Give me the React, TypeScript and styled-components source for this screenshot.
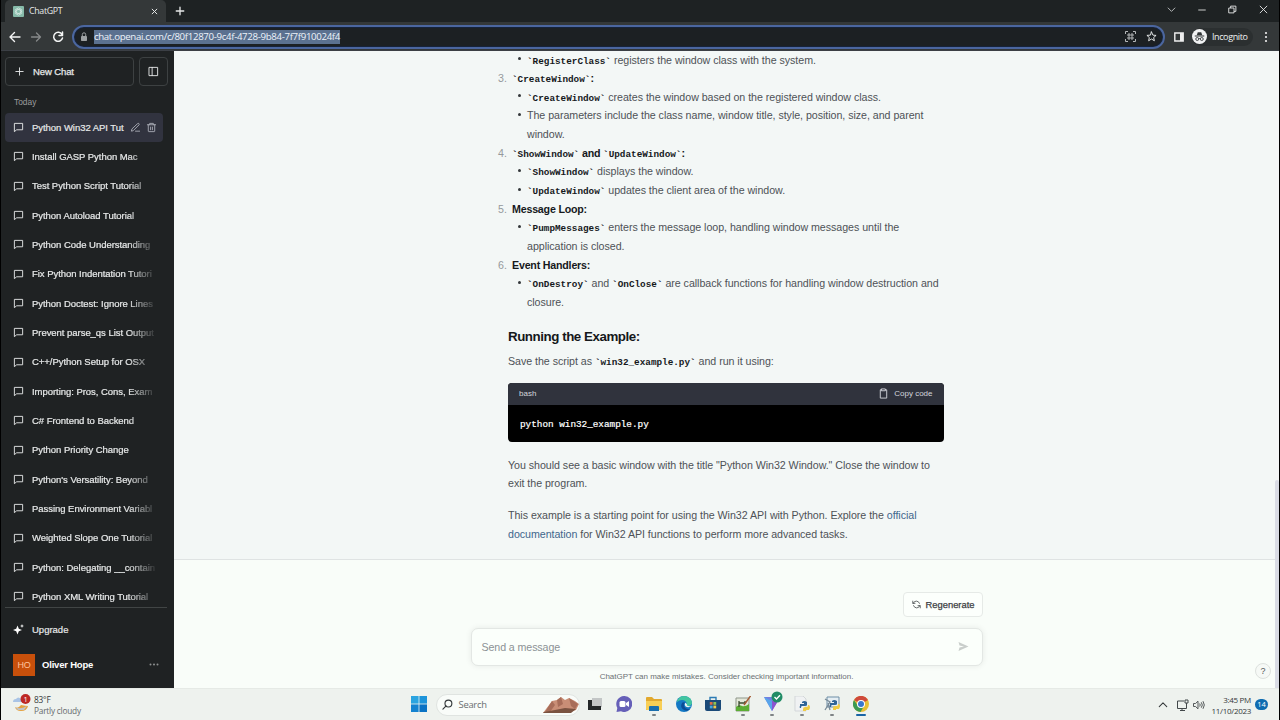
import React from "react";
import styled, { createGlobalStyle, css } from "styled-components";

const sans = `"Liberation Sans", Arial, sans-serif`;
const system = `"Open Sans", "Noto Sans", sans-serif`;
const mono = `"Liberation Mono", monospace`;

const GlobalStyle = createGlobalStyle`
  * { box-sizing: border-box; }
  body { margin: 0; background: #000; overflow: hidden; }
  svg { display: block; flex: none; }
`;

/* ---------- window ---------- */
const Screen = styled.div`
  width: 1280px; height: 720px; display: flex; flex-direction: column;
  border-left: 1px solid #000; border-right: 1px solid #000;
  overflow: hidden; font-family: ${sans};
`;
const TabStrip = styled.header`
  height: 22px; flex: none; display: flex; background: #1e2223; color: #e6e8e8;
  font-family: ${system}; padding-left: 4px;
`;
const Tab = styled.div`
  width: 161px; height: 22px; background: #343839; border-radius: 5px 5px 0 0;
  display: flex; align-items: center; padding: 0 8px 0 8px; font-size: 8.8px;
`;
const TabTitle = styled.span`flex: 1; margin-left: 5px; letter-spacing: -0.3px;`;
const NewTab = styled.div`width: 28px; display: grid; place-items: center;`;
const WindowButtons = styled.div`
  margin-left: auto; display: flex; align-items: center; height: 19px;
`;
const WindowButton = styled.div`width: 30.7px; display: grid; place-items: center;`;

const Toolbar = styled.nav`
  height: 29px; flex: none; display: flex; align-items: center;
  background: #343839; color: #f0f2f2; font-family: ${system};
  padding: 1px 0 0 8px; border-bottom: 1px solid #3b3f45;
`;
const NavButton = styled.div<{ $dim?: boolean }>`
  width: 21.3px; color: ${(p) => (p.$dim ? "#86898a" : "#f4f5f5")};
`;
const AddressBar = styled.div`
  width: 1093px; height: 24px; border: 2px solid #4b669f; border-radius: 12px; margin-left: -1px;
  background: #1c2023; display: flex; align-items: center; padding: 0 6px 0 6px;
  box-shadow: inset 0 0 0 1px #16233a;
`;
const Url = styled.span`
  margin: 1px 0 0 6px; height: 14px; line-height: 14px; background: #5b7190; color: #edf3fa;
  font-size: 9.7px; letter-spacing: -0.34px; white-space: nowrap;
`;
const AddressIcons = styled.div`margin-left: auto; display: flex; gap: 10px; align-items: center;`;
const Incognito = styled.div`
  display: flex; align-items: center; height: 18px; width: 61px; border-radius: 9px;
  background: #2b2f30; font-size: 9px; letter-spacing: -0.38px; gap: 5px; margin-left: 8px;
`;
const Body = styled.div`height: 637px; flex: none; display: flex;`;

/* ---------- sidebar ---------- */
const Sidebar = styled.aside`
  width: 172.5px; flex: none; background: #1f2223; color: #e7e9e9; padding: 6px 5px 0 4px;
  display: flex; flex-direction: column; font-size: 9.5px;
`;
const SideTop = styled.div`display: flex; gap: 5px; height: 29px; flex: none;`;
const OutlineButton = styled.div<{ $w: number }>`
  width: ${(p) => p.$w}px; height: 29px; border: 1px solid #3d4142; border-radius: 4px;
  display: flex; align-items: center; padding-left: 8px; gap: 8px; -webkit-text-stroke: 0.25px;
  letter-spacing: -0.1px;
`;
const GroupLabel = styled.div`
  height: 27px; padding: 10px 0 0 9px; font-size: 8.4px; line-height: 12px; color: #9b9d9e; flex: none;
`;
const ChatList = styled.div`height: 494px; overflow: hidden; flex: none;`;
const ChatRow = styled.div<{ $active?: boolean }>`
  height: 29.33px; width: 158px; display: flex; align-items: center; padding-left: 8px;
  border-radius: 4px; background: ${(p) => (p.$active ? "#31333f" : "transparent")};
`;
const ChatTitle = styled.span<{ $active?: boolean }>`
  width: ${(p) => (p.$active ? 93 : 124)}px; margin-left: 8px; overflow: hidden; white-space: nowrap;
  line-height: 14px; letter-spacing: -0.04px; -webkit-text-stroke: 0.2px;
  ${(p) =>
    !p.$active &&
    css`
      mask-image: linear-gradient(90deg, #000 96px, transparent 126px);
    `}
`;
const RowTools = styled.span`display: flex; gap: 5px; margin-left: 5px; color: #a9abb5;`;
const SideFooter = styled.div`border-top: 1px solid #414545; flex: 1; width: 162px;`;
const Upgrade = styled.div`
  height: 42px; display: flex; align-items: center; gap: 8px; padding-left: 8px; -webkit-text-stroke: 0.2px;
`;
const User = styled.div`
  height: 29px; display: flex; align-items: center; padding: 0 8px; font-weight: bold; color: #fff;
  letter-spacing: -0.2px;
`;
const Avatar = styled.div`
  width: 22px; height: 22px; background: #c8500b; color: #ffc39c; display: grid; place-items: center;
  font-size: 9px; font-weight: 400; margin-right: 7px;
`;
const More = styled.span`margin-left: auto; color: #8e9090;`;

/* ---------- conversation ---------- */
const Main = styled.main`
  flex: 1; height: 637px; background: #f9fdf9; display: flex; flex-direction: column; overflow: hidden;
`;
const Answer = styled.section`
  height: 509px; flex: none; background: #f3f7f6; border-bottom: 1px solid #dfe3e3;
  padding-left: 334.5px; color: #4e5256; font-size: 10.67px; line-height: 18.67px;
`;
const Steps = styled.div`margin-top: -0.5px;`;
const Line = styled.div<{ $pad?: number }>`
  display: flex; height: 18.67px; white-space: pre; padding-left: ${(p) => p.$pad ?? 0}px;
  letter-spacing: -0.04px;
`;
const Marker = styled.span<{ $num?: boolean }>`
  width: ${(p) => (p.$num ? 14 : 11)}px; flex: none; margin-left: ${(p) => (p.$num ? -10 : 8)}px;
  color: ${(p) => (p.$num ? "#95999c" : "#2a2d30")};
`;
const Dot = styled.i`display: block; width: 3px; height: 3px; border-radius: 50%; background: #33363a; margin: 6.5px 0 0 2px;`;
const Code = styled.code`
  font: bold 9.33px/1 ${mono}; color: #16191c; letter-spacing: 0;
`;
const Strong = styled.strong`font-weight: bold; color: #16191c; letter-spacing: -0.2px;`;
const Heading = styled.h3`
  margin: 14px 0 5px; height: 21.3px; line-height: 21.3px; font-size: 13.33px; font-weight: bold;
  color: #15181b; letter-spacing: -0.45px;
`;
const CodeBlock = styled.div`
  width: 435.5px; height: 58.5px; margin: 12.5px 0 14px; border-radius: 4px; overflow: hidden; background: #000;
`;
const CodeHead = styled.div`
  height: 21.5px; background: #30333d; color: #d3d5dc; display: flex; align-items: center;
  padding: 0 11px; font-size: 8px; line-height: 12px;
`;
const Copy = styled.span`margin-left: auto; display: flex; gap: 5px; align-items: center;`;
const CodeBody = styled.pre`
  margin: 0; padding: 12px 12px; font: 9.33px/16px ${mono}; color: #fff; -webkit-text-stroke: 0.2px #fff;
`;
const Gap = styled.div`height: 13.3px;`;
const Link = styled.a`color: #41668c;`;

const Composer = styled.section`
  flex: 1; width: 512px; margin-left: 297px; padding-top: 32.3px; display: flex; flex-direction: column;
`;
const Regenerate = styled.button`
  align-self: flex-end; width: 80px; height: 25px; display: flex; align-items: center; gap: 5px;
  padding: 0 0 0 8px; border: 1px solid #e6eae7; border-radius: 4px; background: #fcfffc;
  color: #3c4043; font: 9.4px ${sans}; -webkit-text-stroke: 0.25px; white-space: nowrap;
`;
const Input = styled.div`
  height: 38px; margin-top: 10.7px; border: 1px solid #e3e7e4; border-radius: 7px; background: #fbfffb;
  box-shadow: 0 0 6px rgba(0, 0, 0, 0.08); display: flex; align-items: center; justify-content: space-between;
  padding: 0 13px 0 10px; color: #8c9295; font-size: 10.67px; letter-spacing: -0.1px;
`;
const Note = styled.div`margin-top: 5px; text-align: center; font-size: 8px; line-height: 12px; color: #6b7073;`;
const ScrollTrack = styled.div`
  width: 4.5px; flex: none; background: #f4f6f6; display: flex; align-items: flex-end;
`;
const Thumb = styled.div`width: 4.5px; height: 208px; background: #d9dbe4; border-radius: 2px 2px 0 0;`;
const Help = styled.div`
  position: absolute; left: 1255px; top: 663px; width: 16px; height: 16px; border-radius: 50%;
  border: 1px solid #dde1de; background: #f6f9f6; display: grid; place-items: center;
  font-size: 9px; color: #55595b;
`;

/* ---------- taskbar ---------- */
const Taskbar = styled.footer`
  height: 32px; flex: none; background: #eef2ee; display: flex; align-items: center; border-top: 1px solid #e6eae6;
  font-family: ${system}; color: #34383a; font-size: 8.3px; line-height: 11px;
`;
const Weather = styled.div`
  width: 401.5px; padding-left: 11px; display: flex; gap: 2px; letter-spacing: -0.22px;
`;
const Muted = styled.div`color: #65696b;`;
const Search = styled.div`
  width: 144px; height: 22px; border-radius: 11px; background: #f9fcf9; border: 1px solid #e0e4e1;
  display: flex; align-items: center; padding-left: 5px; font-size: 9.4px; color: #6a6e70; margin-right: 0.5px;
`;
const SearchText = styled.span`flex: 1; margin-left: 6px; letter-spacing: -0.25px;`;
const SearchIcon = styled.span`color: #33383a;`;
const AppSlot = styled.div<{ $w?: number; $run?: "on" | "active" }>`
  width: ${(p) => p.$w ?? 29.6}px; height: 31px; display: flex; flex-direction: column; align-items: center;
  padding-top: 6.5px;
  &::after {
    content: ""; margin-top: 2.5px; height: 2px; border-radius: 1px;
    width: ${(p) => (p.$run === "active" ? 10 : p.$run ? 4 : 0)}px;
    background: ${(p) => (p.$run === "active" ? "#1a65a5" : "#7f8486")};
  }
`;
const Tray = styled.div`margin-left: auto; display: flex; align-items: center; padding-right: 11px;`;
const Clock = styled.div`
  width: 40px; margin: 0 4px 0 6px; font-size: 8px; letter-spacing: -0.3px; white-space: nowrap;
  display: flex; flex-direction: column; align-items: flex-end;
`;
const Badge = styled.div`
  width: 13px; height: 11px; border-radius: 6px; background: #0f6cb0; color: #fff; display: grid; place-items: center; font-size: 7.5px;
`;

type IconProps = { size?: number; w?: number; children: React.ReactNode };
const Stroke = ({ size = 11, w = 2, children }: IconProps) => (
  <svg width={size} height={size} viewBox="0 0 24 24" fill="none" stroke="currentColor" strokeWidth={w} strokeLinecap="round" strokeLinejoin="round">
    {children}
  </svg>
);
const ChatIcon = () => (
  <Stroke size={11}>
    <path d="M3 3h18v14H8l-5 4z" strokeLinecap="butt" />
  </Stroke>
);

const chats = [
  "Install GASP Python Mac",
  "Test Python Script Tutorial",
  "Python Autoload Tutorial",
  "Python Code Understanding",
  "Fix Python Indentation Tutori",
  "Python Doctest: Ignore Lines",
  "Prevent parse_qs List Output",
  "C++/Python Setup for OSX",
  "Importing: Pros, Cons, Exam",
  "C# Frontend to Backend",
  "Python Priority Change",
  "Python's Versatility: Beyond",
  "Passing Environment Variabl",
  "Weighted Slope One Tutorial",
  "Python: Delegating __contain",
  "Python XML Writing Tutorial",
];

const Bullet = ({ children }: { children: React.ReactNode }) => (
  <Line>
    <Marker><Dot /></Marker>
    <span>{children}</span>
  </Line>
);
const Numbered = ({ n, children }: { n: number; children: React.ReactNode }) => (
  <Line>
    <Marker $num>{n}.</Marker>
    <span>{children}</span>
  </Line>
);
const Tick = ({ children }: { children: string }) => <Code>{"`" + children + "`"}</Code>;

const PythonMark = ({ x, y }: { x: number; y: number }) => (
  <g transform={`translate(${x} ${y})`}>
    <path d="M1 5V3h4V2H3V1q2-2 5 0v3q0 1-2 1H3q-1 0-1 2H1Q0 6 1 5z" fill="#2f6597" />
    <path d="M9 4h1q2 2 0 5H7v1H4V8q0-2 2-2h2q1 0 1-2z" fill="#f0cc45" />
  </g>
);

export default function App() {
  return (
    <>
      <GlobalStyle />
      <Screen>
        <TabStrip>
          <Tab>
            <svg width="11" height="11" viewBox="0 0 22 22">
              <rect width="22" height="22" rx="2" fill="#86baa9" />
              <g fill="none" stroke="#e0efe9" strokeWidth="1.1">
                <ellipse cx="11" cy="11" rx="4" ry="7.5" />
                <ellipse cx="11" cy="11" rx="4" ry="7.5" transform="rotate(60 11 11)" />
                <ellipse cx="11" cy="11" rx="4" ry="7.5" transform="rotate(120 11 11)" />
              </g>
            </svg>
            <TabTitle>ChatGPT</TabTitle>
            <Stroke size={7} w={3.4}><path d="M4 4l16 16M20 4L4 20" /></Stroke>
          </Tab>
          <NewTab><Stroke size={10} w={3.2}><path d="M12 3v18M3 12h18" /></Stroke></NewTab>
          <WindowButtons>
            <WindowButton><Stroke size={9}><path d="M3 8l9 9 9-9" /></Stroke></WindowButton>
            <WindowButton><Stroke size={8} w={2.6}><path d="M2 12h20" /></Stroke></WindowButton>
            <WindowButton><Stroke size={9} w={2.4}><path d="M3 8h13v13H3zM7 7V3h14v14h-4" /></Stroke></WindowButton>
            <WindowButton><Stroke size={9} w={2.4}><path d="M3 3l18 18M21 3L3 21" /></Stroke></WindowButton>
          </WindowButtons>
        </TabStrip>
        <Toolbar>
          <NavButton><Stroke size={12} w={2.8}><path d="M22 12H3M11 3l-9 9 9 9" /></Stroke></NavButton>
          <NavButton $dim><Stroke size={12} w={2.6}><path d="M3 12h18M13 4l8 8-8 8" /></Stroke></NavButton>
          <NavButton><Stroke size={12} w={3}><path d="M20 7a9 9 0 1 0 1 7M21 2v7h-7" /></Stroke></NavButton>
          <AddressBar>
            <svg width="8" height="10" viewBox="0 0 8 10"><rect x="1" y="4" width="6" height="5" rx=".7" fill="#9da0a2" /><path d="M2.3 4V2.5a1.7 1.7 0 0 1 3.4 0V4" fill="none" stroke="#9da0a2" /></svg>
            <Url>chat.openai.com/c/80f12870-9c4f-4728-9b84-7f7f910024f4</Url>
            <AddressIcons>
              <svg width="11" height="11" viewBox="0 0 11 11" fill="none" stroke="#b4b7b9"><path d="M.5 3V.5H3M8 .5h2.500V3M10.500 8v2.500H8M3 10.500H.5V8M2 4h2V2M7 2v2h2M4 9V7H2M7 9V7h2M4 4h3v3H4z" /></svg>
              <Stroke size={11}><path d="M12 2l3 7 7 .6-5.300 4.700 1.600 7L12 17.500l-6.300 3.800 1.600-7L2 9.600 9 9z" /></Stroke>
            </AddressIcons>
          </AddressBar>
          <svg width="10" height="10" viewBox="0 0 10 10" style={{ marginLeft: 9 }}><path d="M.8 1h8.400v8H.8z" fill="none" stroke="#eee" strokeWidth="1.400" /><path d="M6 1h3v8H6z" fill="#eee" /></svg>
          <Incognito>
            <svg width="15" height="15" viewBox="0 0 30 30"><circle cx="15" cy="15" r="15" fill="#f1f2f3" /><path d="M9.500 12.500l2-6h7l2 6z" fill="#303436" /><path d="M5.500 14h19" stroke="#303436" strokeWidth="2" /><g fill="none" stroke="#303436" strokeWidth="1.700"><circle cx="10.500" cy="20" r="3" /><circle cx="19.500" cy="20" r="3" /><path d="M13.500 19.500q1.500-1 3 0" /></g></svg>
            Incognito
          </Incognito>
          <svg width="4" height="12" viewBox="0 0 4 12" fill="#eee" style={{ marginLeft: 11 }}><circle cx="2" cy="2" r="1.100" /><circle cx="2" cy="6" r="1.100" /><circle cx="2" cy="10" r="1.100" /></svg>
        </Toolbar>

        <Body>
          <Sidebar>
            <SideTop>
              <OutlineButton $w={129}>
                <Stroke size={11}><path d="M12 4v16M4 12h16" /></Stroke>
                New Chat
              </OutlineButton>
              <OutlineButton $w={29}>
                <Stroke size={11}><path d="M3 3h18v18H3zM9 3v18" /></Stroke>
              </OutlineButton>
            </SideTop>
            <GroupLabel>Today</GroupLabel>
            <ChatList>
              <ChatRow $active>
                <ChatIcon />
                <ChatTitle $active>Python Win32 API Tut</ChatTitle>
                <RowTools>
                  <Stroke size={11}><path d="M12 20h9M16.500 3.500a2 2 0 0 1 3 3L7 19l-4 1 1-4z" /></Stroke>
                  <Stroke size={11}><path d="M3 6h18M19 6v14a1 1 0 0 1-1 1H6a1 1 0 0 1-1-1V6M8 6V3h8v3M10 11v6M14 11v6" /></Stroke>
                </RowTools>
              </ChatRow>
              {chats.map((title) => (
                <ChatRow key={title}>
                  <ChatIcon />
                  <ChatTitle>{title}</ChatTitle>
                </ChatRow>
              ))}
            </ChatList>
            <SideFooter>
              <Upgrade>
                <svg width="11" height="11" viewBox="0 0 22 22" fill="#fff"><path d="M9 3l2.600 6.400L18 12l-6.400 2.600L9 21l-2.600-6.400L0 12l6.400-2.600zM18 0l1.100 3L22 4l-2.900 1L18 8l-1.100-3L14 4l2.900-1z" /></svg>
                Upgrade
              </Upgrade>
              <User>
                <Avatar>HO</Avatar>
                Oliver Hope
                <More><svg width="10" height="3" viewBox="0 0 10 3" fill="currentColor"><circle cx="1.500" cy="1.500" r="1" /><circle cx="5" cy="1.500" r="1" /><circle cx="8.500" cy="1.500" r="1" /></svg></More>
              </User>
            </SideFooter>
          </Sidebar>

          <Main>
            <Answer>
              <Steps>
                <Bullet><Tick>RegisterClass</Tick> registers the window class with the system.</Bullet>
                <Numbered n={3}><Strong><Tick>CreateWindow</Tick>:</Strong></Numbered>
                <Bullet><Tick>CreateWindow</Tick> creates the window based on the registered window class.</Bullet>
                <Bullet>The parameters include the class name, window title, style, position, size, and parent</Bullet>
                <Line $pad={19}>window.</Line>
                <Numbered n={4}><Strong><Tick>ShowWindow</Tick> and <Tick>UpdateWindow</Tick>:</Strong></Numbered>
                <Bullet><Tick>ShowWindow</Tick> displays the window.</Bullet>
                <Bullet><Tick>UpdateWindow</Tick> updates the client area of the window.</Bullet>
                <Numbered n={5}><Strong>Message Loop:</Strong></Numbered>
                <Bullet><Tick>PumpMessages</Tick> enters the message loop, handling window messages until the</Bullet>
                <Line $pad={19}>application is closed.</Line>
                <Numbered n={6}><Strong>Event Handlers:</Strong></Numbered>
                <Bullet><Tick>OnDestroy</Tick> and <Tick>OnClose</Tick> are callback functions for handling window destruction and</Bullet>
                <Line $pad={19}>closure.</Line>
              </Steps>
              <Heading>Running the Example:</Heading>
              <Line><span>Save the script as <Tick>win32_example.py</Tick> and run it using:</span></Line>
              <CodeBlock>
                <CodeHead>
                  bash
                  <Copy>
                    <Stroke size={11}><path d="M16 4h3v18H5V4h3M8 2h8v4H8z" /></Stroke>
                    Copy code
                  </Copy>
                </CodeHead>
                <CodeBody>python win32_example.py</CodeBody>
              </CodeBlock>
              <Line>You should see a basic window with the title "Python Win32 Window." Close the window to</Line>
              <Line>exit the program.</Line>
              <Gap />
              <Line>This example is a starting point for using the Win32 API with Python. Explore the <Link>official</Link></Line>
              <Line><Link>documentation</Link> for Win32 API functions to perform more advanced tasks.</Line>
            </Answer>
            <Composer>
              <Regenerate>
                <Stroke size={9} w={2}><path d="M2 3v6h6M22 21v-6h-6M3 9a9 9 0 0 1 17 0M21 15a9 9 0 0 1-17 0" /></Stroke>
                Regenerate
              </Regenerate>
              <Input>
                Send a message
                <svg width="11" height="11" viewBox="0 0 22 22" fill="#c9cecb"><path d="M1 2l20 9L1 20l2-7 9-2-9-2z" /></svg>
              </Input>
              <Note>ChatGPT can make mistakes. Consider checking important information.</Note>
            </Composer>
          </Main>
          <ScrollTrack><Thumb /></ScrollTrack>
        </Body>
        <Help>?</Help>

        <Taskbar>
          <Weather>
            <svg width="20" height="20" viewBox="0 0 20 20">
              <path d="M1 8q0-3 3-3 2-3 5 0 3 0 3 3z" fill="#a9c4e6" />
              <path d="M3 13q3 2 6-2 5 1 7 1-1 5-7 5-5 0-6-4z" fill="#e4a13f" /><path d="M3 13q5 3 12-1l-3 4H6z" fill="#bfc4cb" />
              <circle cx="13.500" cy="5" r="5" fill="#bd2824" /><text x="13.500" y="7.700" fontSize="7.500" textAnchor="middle" fill="#fff">1</text>
            </svg>
            <div>83°F<Muted>Partly cloudy</Muted></div>
          </Weather>
          <AppSlot $w={33}>
            <svg width="16" height="16" viewBox="0 0 16 16"><path d="M0 0h7.600v7.600H0z" fill="#2ba4e0" /><path d="M8.400 0H16v7.600H8.400z" fill="#1d94da" /><path d="M0 8.400h7.600V16H0z" fill="#1583d0" /><path d="M8.400 8.400H16V16H8.400z" fill="#0a72c4" /></svg>
          </AppSlot>
          <Search>
            <SearchIcon><Stroke size={11} w={2.500}><circle cx="14" cy="10" r="7.500" /><path d="M9 15l-7 7" /></Stroke></SearchIcon>
            <SearchText>Search</SearchText>
            <svg width="36" height="19" viewBox="0 0 36 19">
              <path d="M0 18l9-12 5-1 4-3 4 3 4-2 6 3 4 3-3 6-9 3z" fill="#c98e76" />
              <path d="M9 6l3 4-5 7H2zM18 2l2 7-5 3-1-7zM26 3l2 8 4 3 3-5z" fill="#a86d59" />
              <path d="M1 17l11-2 10-2 11 1-5 4H0z" fill="#7a5240" />
            </svg>
          </Search>
          <AppSlot><svg width="16" height="16" viewBox="0 0 16 16"><path d="M5 2h10v9H5z" fill="#c3c6c6" /><path d="M1 4h4v6h9v4H1z" fill="#242829" /></svg></AppSlot>
          <AppSlot><svg width="16" height="16" viewBox="0 0 16 16"><path d="M8 0a8 8 0 1 1-3 15.300L.5 16l.8-4A8 8 0 0 1 8 0z" fill="#6660b8" /><rect x="3.500" y="5" width="6" height="6" rx="1.500" fill="#fff" /><path d="M10 7l3-2v6l-3-2z" fill="#fff" /></svg></AppSlot>
          <AppSlot $run="on"><svg width="16" height="16" viewBox="0 0 16 16"><path d="M0 2q0-1 1-1h5l2 2h7q1 0 1 1v10H0z" fill="#e2a92e" /><path d="M0 5h16v8q0 1-1 1H1q-1 0-1-1z" fill="#f8cf55" /><path d="M3 11q0-1 1-1h8q1 0 1 1v4H3z" fill="#1b6fae" /></svg></AppSlot>
          <AppSlot><svg width="16" height="16" viewBox="0 0 16 16"><circle cx="8" cy="8" r="8" fill="#1479c4" /><path d="M1 5Q4-1 10 .3q6 1.500 6 7.200-1 3-5 2.500-1-1 0-2Q10 4 6 4 3 4 1 6z" fill="#42c5a0" /><path d="M6 7q-3 5 3 7.500 3 .5 5-1Q9 13 8 10q-.5-3 1.500-3Q7 5.500 6 7z" fill="#0d4c96" /><path d="M9.500 6.800Q8 8 9.600 10.500q3 1.500 6.200-.5-3 .8-5-.5 1-1-1.300-2.700z" fill="#f0f5f2" /></svg></AppSlot>
          <AppSlot><svg width="16" height="16" viewBox="0 0 16 16"><path d="M5 4V1.500h6V4" fill="none" stroke="#2c7bb4" strokeWidth="1.400" /><path d="M0 4h16v9q0 2-2 2H2q-2 0-2-2z" fill="#1b4a78" /><path d="M4.800 6h2.800v2.800H4.800z" fill="#de6b45" /><path d="M8.400 6h2.800v2.800H8.400z" fill="#8fc152" /><path d="M4.800 9.600h2.800v2.800H4.800z" fill="#46a8dc" /><path d="M8.400 9.600h2.800v2.800H8.400z" fill="#f0c849" /></svg></AppSlot>
          <AppSlot $run="on"><svg width="16" height="16" viewBox="0 0 16 16"><path d="M1 2h13v13H1z" fill="#e4e9da" stroke="#8f978a" /><path d="M1 11q3-3 6-1 3 1 7-2v7H1z" fill="#5cae34" /><path d="M4 5v6M4 7h6M10 5v3" stroke="#3c4c32" strokeWidth="1.300" /><path d="M15.500 0L9 9" stroke="#a65b34" strokeWidth="1.400" /></svg></AppSlot>
          <AppSlot $run="on"><svg width="22" height="16" viewBox="0 0 22 16" overflow="visible"><path d="M3 1h16l-8 14z" fill="#7280e0" /><path d="M3 1l8 14V5z" fill="#58a5ea" /><path d="M11 5v10l6-10z" fill="#8b54cf" /><circle cx="16" cy="1" r="5.500" fill="#218c66" /><path d="M13.500 1l2 2L19-.7" fill="none" stroke="#fff" strokeWidth="1.400" /></svg></AppSlot>
          <AppSlot $run="on"><svg width="16" height="16" viewBox="0 0 16 16"><path d="M1 0h8l3 3v12H1z" fill="#f0f2f3" stroke="#d3d7d9" /><PythonMark x={5} y={5} /></svg></AppSlot>
          <AppSlot $run="on"><svg width="16" height="16" viewBox="0 0 16 16"><path d="M3 1h12v10H3z" fill="#e5eef3" stroke="#6e8fa7" /><path d="M1 3l5 3-5 8M4 7l2 7" fill="none" stroke="#7a8c98" strokeWidth="1.300" /><PythonMark x={5} y={4} /></svg></AppSlot>
          <AppSlot $run="active"><svg width="16" height="16" viewBox="0 0 16 16"><circle cx="8" cy="8" r="8" fill="#e8bf36" /><path d="M8 8L1 4a8 8 0 0 1 14 0z" fill="#cf4a3c" /><path d="M1 4a8 8 0 0 0 6.500 12L11 10 5 10z" fill="#3c9a53" /><circle cx="8" cy="8" r="4" fill="#fff" /><circle cx="8" cy="8" r="3" fill="#3a77cf" /></svg></AppSlot>
          <Tray>
            <Stroke size={10} w={2.500}><path d="M3 16l9-9 9 9" /></Stroke>
            <svg width="13" height="12" viewBox="0 0 13 12" fill="none" stroke="#43484a" style={{ marginLeft: 8 }}><path d="M8 2H1.500v7.500h9V6M4 11.500h5M6 9.500v2" /><path d="M9 1h3v3H9zM10.500 4v2" /></svg>
            <svg width="12" height="10" viewBox="0 0 12 10" fill="none" stroke="#43484a" strokeWidth=".9" style={{ marginLeft: 4 }}><path d="M.5 3.500h2L5 1.200v7.600L2.500 6.500h-2zM6.700 3.500q1 1.500 0 3M8.300 2.300q2 2.700 0 5.400M10 1.200q2.600 3.800 0 7.600" /></svg>
            <Clock><span>3:45 PM</span><span>11/10/2023</span></Clock>
            <Badge>14</Badge>
          </Tray>
        </Taskbar>
      </Screen>
    </>
  );
}
